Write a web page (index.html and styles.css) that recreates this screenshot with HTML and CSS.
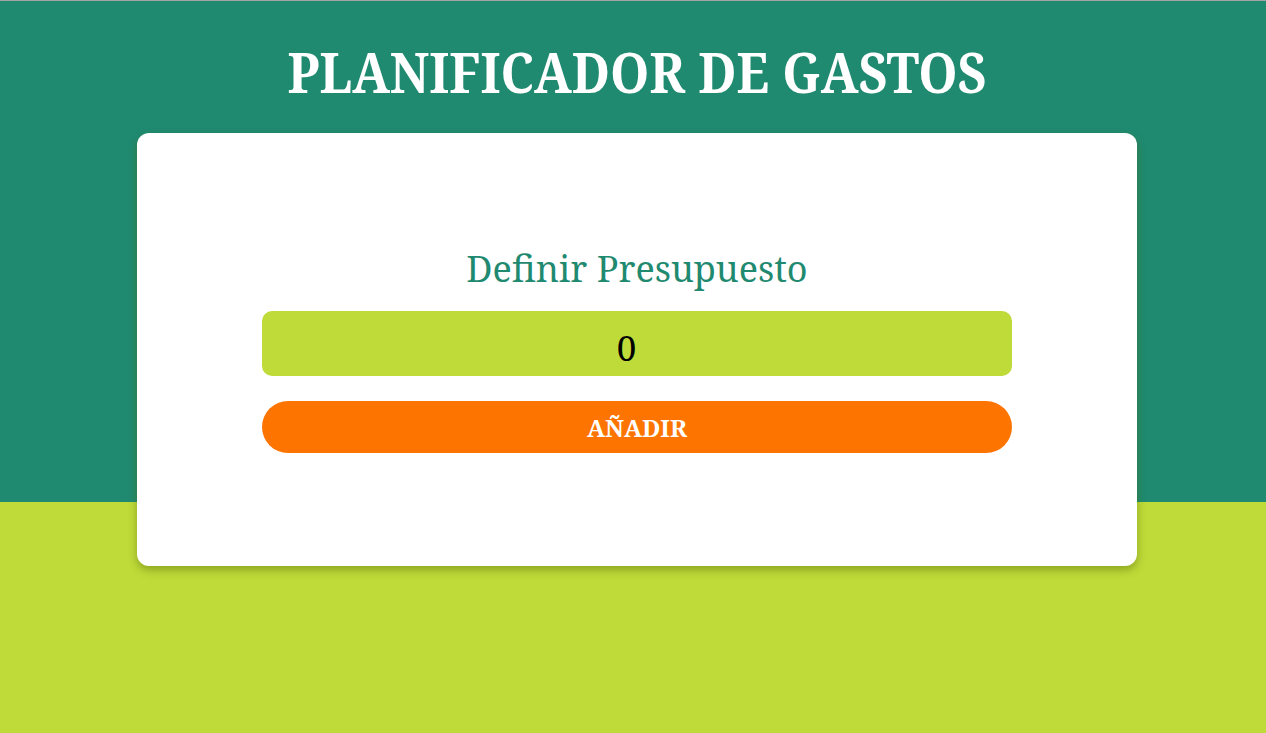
FILE: index.html
```html
<!DOCTYPE html>
<html lang="es">
<head>
<meta charset="utf-8">
<title>Planificador de Gastos</title>
<link rel="stylesheet" href="styles.css">
</head>
<body>
<header class="header">
  <h1 class="title">PLANIFICADOR DE GASTOS</h1>
  <main class="card">
    <form class="budget-form">
      <label class="budget-label" for="budget">Definir Presupuesto</label>
      <input class="budget-input" id="budget" type="number" value="0">
      <button class="budget-button" type="button">AÑADIR</button>
    </form>
  </main>
</header>
</body>
</html>
```

FILE: styles.css
```css
html, body {
  margin: 0;
  padding: 0;
}

body {
  min-height: 733px;
  border-top: 1px solid #a3a3a3;
  box-sizing: border-box;
  background: linear-gradient(to bottom, #1f8a70 0, #1f8a70 502px, #bedb39 502px, #bedb39 100%);
  font-family: "Noto Serif", "DejaVu Serif", serif;
}

.header {
  display: flex;
  flex-direction: column;
  align-items: center;
  padding-left: 8px;
}

.title {
  margin: 38px 0 30px;
  color: #ffffff;
  font-size: 56px;
  font-weight: 700;
  line-height: 64px;
  text-align: center;
  white-space: nowrap;
  transform: scaleX(0.894);
}

.card {
  width: 1000px;
  height: 433px;
  box-sizing: border-box;
  background: #ffffff;
  border-radius: 12px;
  box-shadow: 0 4px 8px rgba(80, 100, 0, 0.45);
  display: flex;
  align-items: center;
  justify-content: center;
}

.budget-form {
  width: 750px;
  display: flex;
  flex-direction: column;
  align-items: stretch;
}

.budget-label {
  color: #1f8a70;
  font-size: 36px;
  line-height: 46px;
  text-align: center;
  margin-bottom: 19px;
}

.budget-input {
  height: 65px;
  box-sizing: border-box;
  padding: 7px 8px 0 2px;
  border: none;
  border-radius: 10px;
  background: #bedb39;
  color: #000000;
  font-family: inherit;
  font-size: 35px;
  text-align: center;
  outline: none;
}

.budget-button {
  margin-top: 25px;
  height: 52px;
  border: none;
  border-radius: 26px;
  background: #fd7400;
  color: #ffffff;
  font-family: inherit;
  font-size: 24px;
  font-weight: 700;
  cursor: pointer;
}
```
